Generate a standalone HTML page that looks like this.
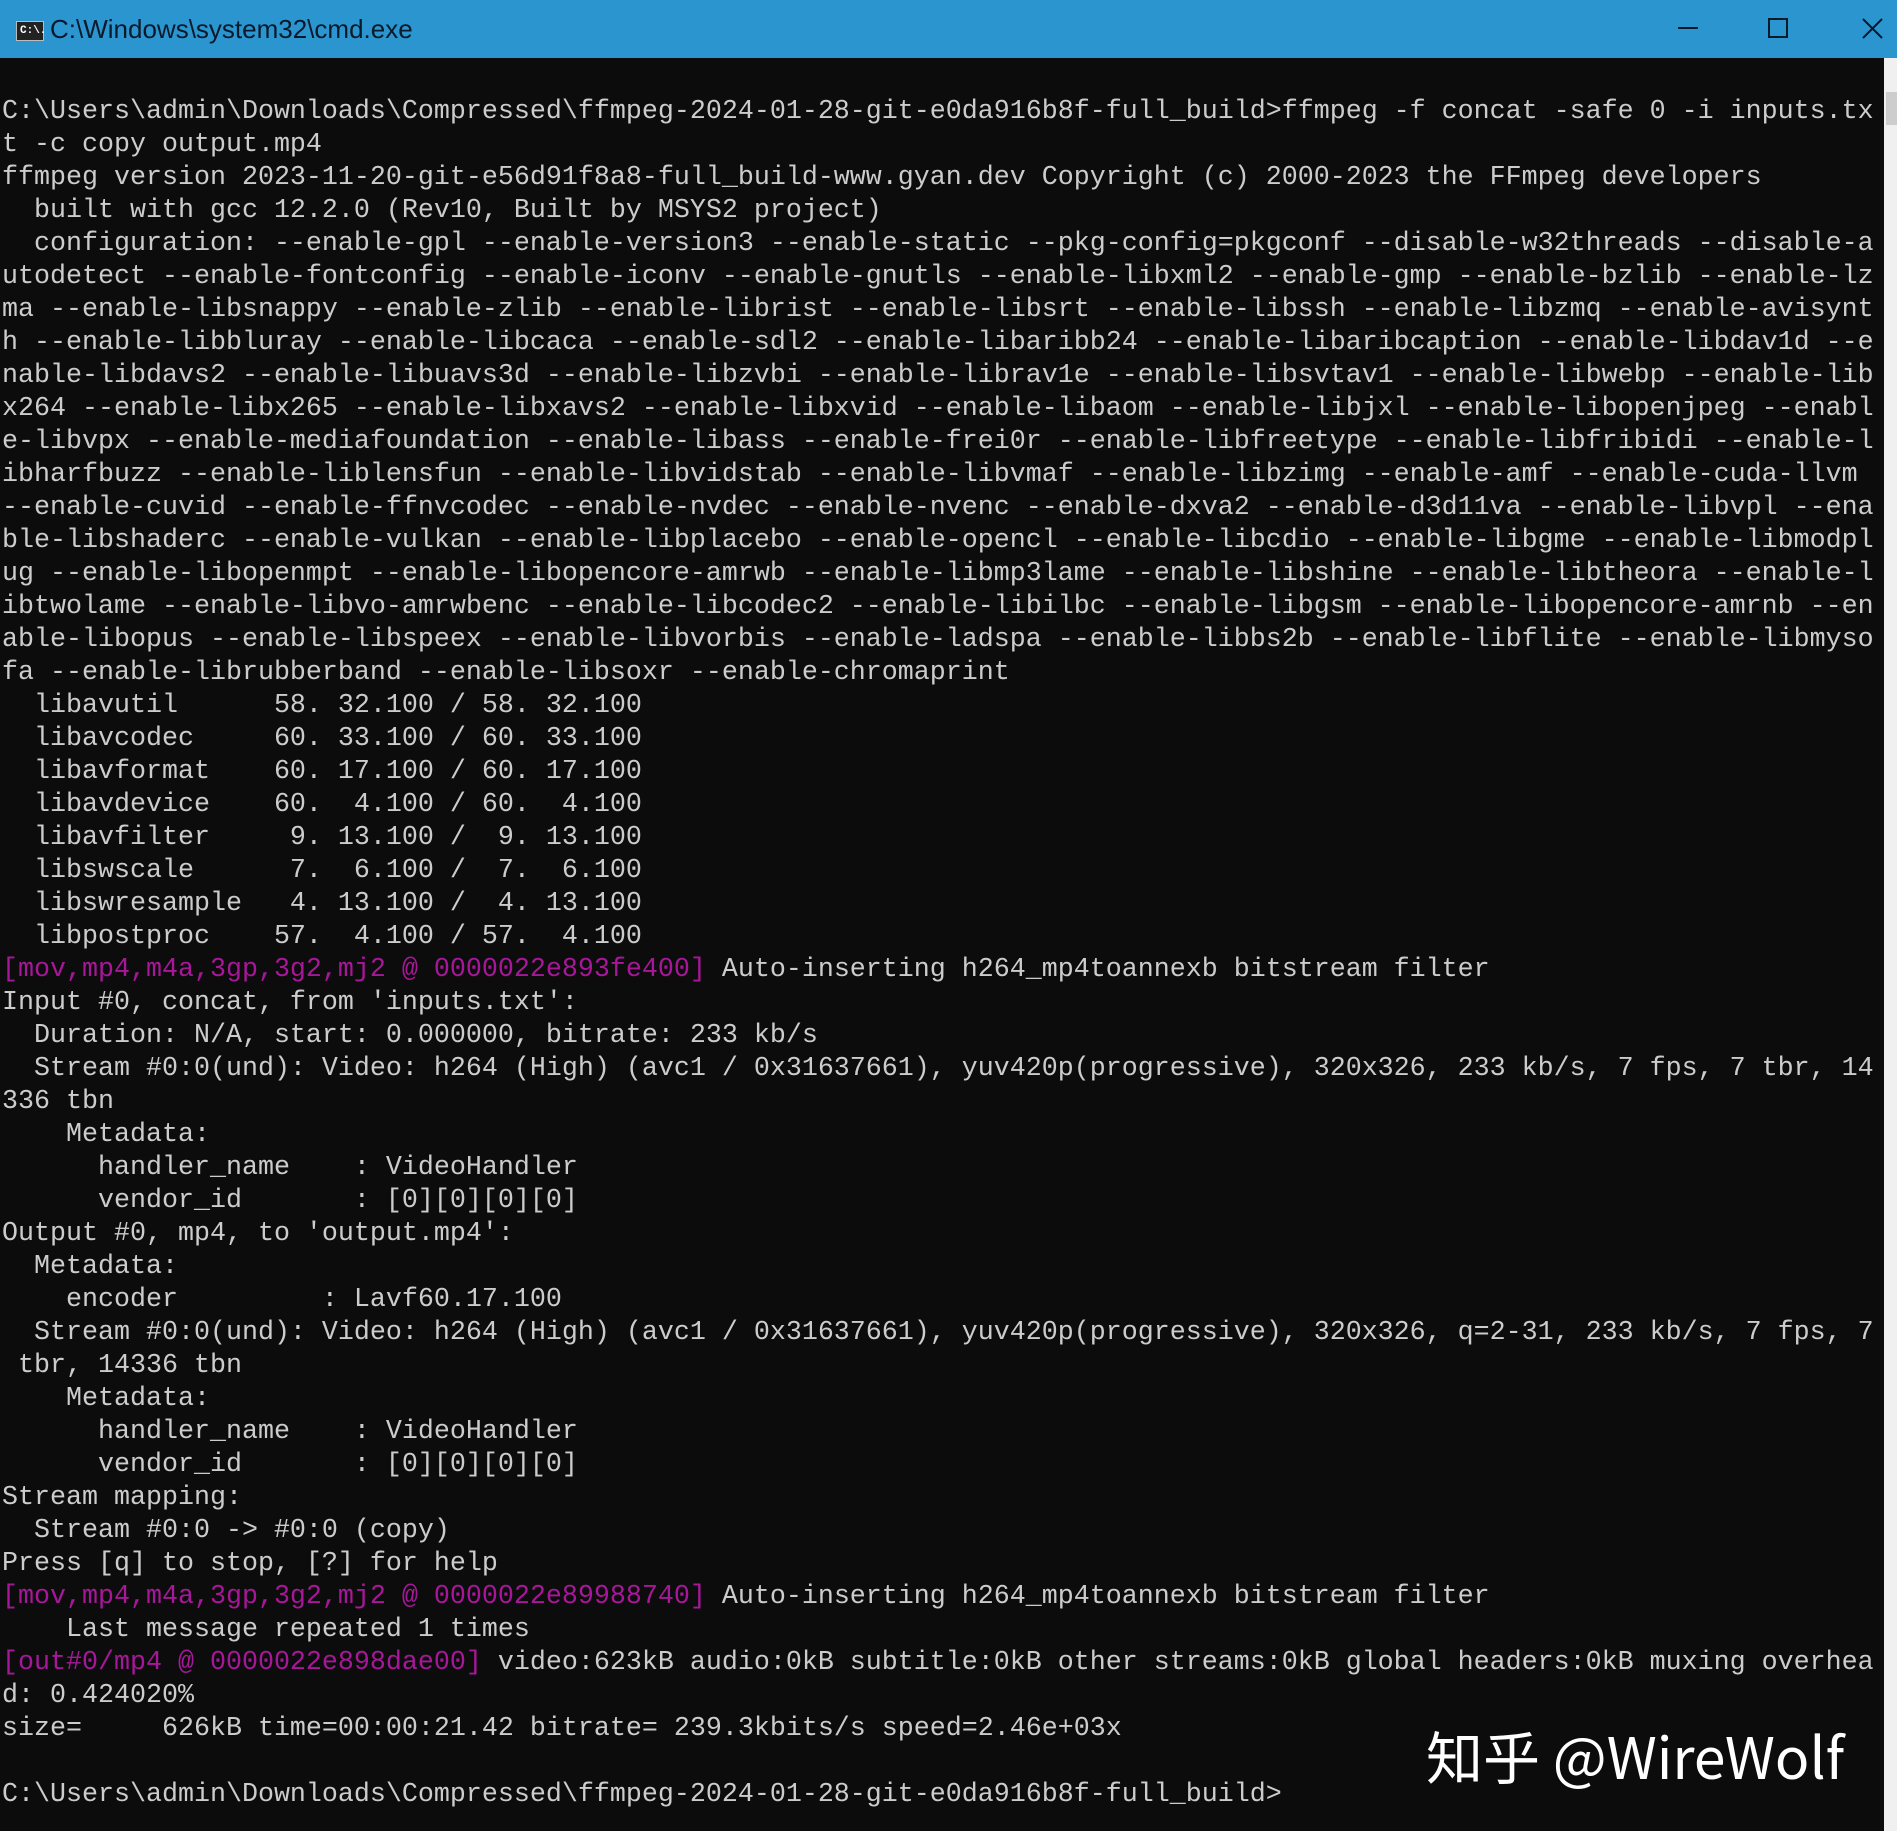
<!DOCTYPE html>
<html><head><meta charset="utf-8">
<style>
html,body{margin:0;padding:0;width:1897px;height:1831px;overflow:hidden;background:#0c0c0c;}
#title{position:absolute;left:0;top:0;width:1897px;height:58px;background:#2b95d0;}
#title .t{position:absolute;left:50px;top:14px;font:26px "Liberation Sans",sans-serif;color:#0a1a2a;}
#icon{position:absolute;left:16px;top:21px;width:28px;height:20px;background:#222;border:1px solid #bbb;box-sizing:border-box;}
#icon span{position:absolute;left:3px;top:3px;font:bold 11px "Liberation Mono",monospace;color:#fff;}
#scroll{position:absolute;left:1884px;top:58px;width:13px;height:1773px;background:#f0f0f0;}
#thumb{position:absolute;left:1886px;top:92px;width:11px;height:33px;background:#cdcdcd;}
pre{position:absolute;left:2px;top:96px;margin:0;font-family:"Liberation Mono",monospace;font-size:26.67px;line-height:33px;color:#cccccc;white-space:pre;}
.m{color:#a8179a;}
#wm{position:absolute;left:1426px;top:1714px;font:57px "Noto Sans CJK SC","Liberation Sans",sans-serif;color:#fff;white-space:nowrap;}
</style></head><body>
<div id="title"><div id="icon"><span>C:\.</span></div><div class="t">C:\Windows\system32\cmd.exe</div>
<svg style="position:absolute;left:1660px;top:14px" width="237" height="32" viewBox="0 0 237 32">
<line x1="18" y1="14" x2="38" y2="14" stroke="#0a1a2a" stroke-width="2"/>
<rect x="109" y="5" width="18" height="18" fill="none" stroke="#0a1a2a" stroke-width="2"/>
<line x1="203" y1="5" x2="222" y2="24" stroke="#0a1a2a" stroke-width="2"/>
<line x1="222" y1="5" x2="203" y2="24" stroke="#0a1a2a" stroke-width="2"/>
</svg></div>
<div id="scroll"></div><div id="thumb"></div>
<pre>C:\Users\admin\Downloads\Compressed\ffmpeg-2024-01-28-git-e0da916b8f-full_build>ffmpeg -f concat -safe 0 -i inputs.tx
t -c copy output.mp4
ffmpeg version 2023-11-20-git-e56d91f8a8-full_build-www.gyan.dev Copyright (c) 2000-2023 the FFmpeg developers
  built with gcc 12.2.0 (Rev10, Built by MSYS2 project)
  configuration: --enable-gpl --enable-version3 --enable-static --pkg-config=pkgconf --disable-w32threads --disable-a
utodetect --enable-fontconfig --enable-iconv --enable-gnutls --enable-libxml2 --enable-gmp --enable-bzlib --enable-lz
ma --enable-libsnappy --enable-zlib --enable-librist --enable-libsrt --enable-libssh --enable-libzmq --enable-avisynt
h --enable-libbluray --enable-libcaca --enable-sdl2 --enable-libaribb24 --enable-libaribcaption --enable-libdav1d --e
nable-libdavs2 --enable-libuavs3d --enable-libzvbi --enable-librav1e --enable-libsvtav1 --enable-libwebp --enable-lib
x264 --enable-libx265 --enable-libxavs2 --enable-libxvid --enable-libaom --enable-libjxl --enable-libopenjpeg --enabl
e-libvpx --enable-mediafoundation --enable-libass --enable-frei0r --enable-libfreetype --enable-libfribidi --enable-l
ibharfbuzz --enable-liblensfun --enable-libvidstab --enable-libvmaf --enable-libzimg --enable-amf --enable-cuda-llvm
--enable-cuvid --enable-ffnvcodec --enable-nvdec --enable-nvenc --enable-dxva2 --enable-d3d11va --enable-libvpl --ena
ble-libshaderc --enable-vulkan --enable-libplacebo --enable-opencl --enable-libcdio --enable-libgme --enable-libmodpl
ug --enable-libopenmpt --enable-libopencore-amrwb --enable-libmp3lame --enable-libshine --enable-libtheora --enable-l
ibtwolame --enable-libvo-amrwbenc --enable-libcodec2 --enable-libilbc --enable-libgsm --enable-libopencore-amrnb --en
able-libopus --enable-libspeex --enable-libvorbis --enable-ladspa --enable-libbs2b --enable-libflite --enable-libmyso
fa --enable-librubberband --enable-libsoxr --enable-chromaprint
  libavutil      58. 32.100 / 58. 32.100
  libavcodec     60. 33.100 / 60. 33.100
  libavformat    60. 17.100 / 60. 17.100
  libavdevice    60.  4.100 / 60.  4.100
  libavfilter     9. 13.100 /  9. 13.100
  libswscale      7.  6.100 /  7.  6.100
  libswresample   4. 13.100 /  4. 13.100
  libpostproc    57.  4.100 / 57.  4.100
<span class="m">[mov,mp4,m4a,3gp,3g2,mj2 @ 0000022e893fe400]</span> Auto-inserting h264_mp4toannexb bitstream filter
Input #0, concat, from 'inputs.txt':
  Duration: N/A, start: 0.000000, bitrate: 233 kb/s
  Stream #0:0(und): Video: h264 (High) (avc1 / 0x31637661), yuv420p(progressive), 320x326, 233 kb/s, 7 fps, 7 tbr, 14
336 tbn
    Metadata:
      handler_name    : VideoHandler
      vendor_id       : [0][0][0][0]
Output #0, mp4, to 'output.mp4':
  Metadata:
    encoder         : Lavf60.17.100
  Stream #0:0(und): Video: h264 (High) (avc1 / 0x31637661), yuv420p(progressive), 320x326, q=2-31, 233 kb/s, 7 fps, 7
 tbr, 14336 tbn
    Metadata:
      handler_name    : VideoHandler
      vendor_id       : [0][0][0][0]
Stream mapping:
  Stream #0:0 -> #0:0 (copy)
Press [q] to stop, [?] for help
<span class="m">[mov,mp4,m4a,3gp,3g2,mj2 @ 0000022e89988740]</span> Auto-inserting h264_mp4toannexb bitstream filter
    Last message repeated 1 times
<span class="m">[out#0/mp4 @ 0000022e898dae00]</span> video:623kB audio:0kB subtitle:0kB other streams:0kB global headers:0kB muxing overhea
d: 0.424020%
size=     626kB time=00:00:21.42 bitrate= 239.3kbits/s speed=2.46e+03x

C:\Users\admin\Downloads\Compressed\ffmpeg-2024-01-28-git-e0da916b8f-full_build></pre>
<div id="wm">知乎 @WireWolf</div>
</body></html>
